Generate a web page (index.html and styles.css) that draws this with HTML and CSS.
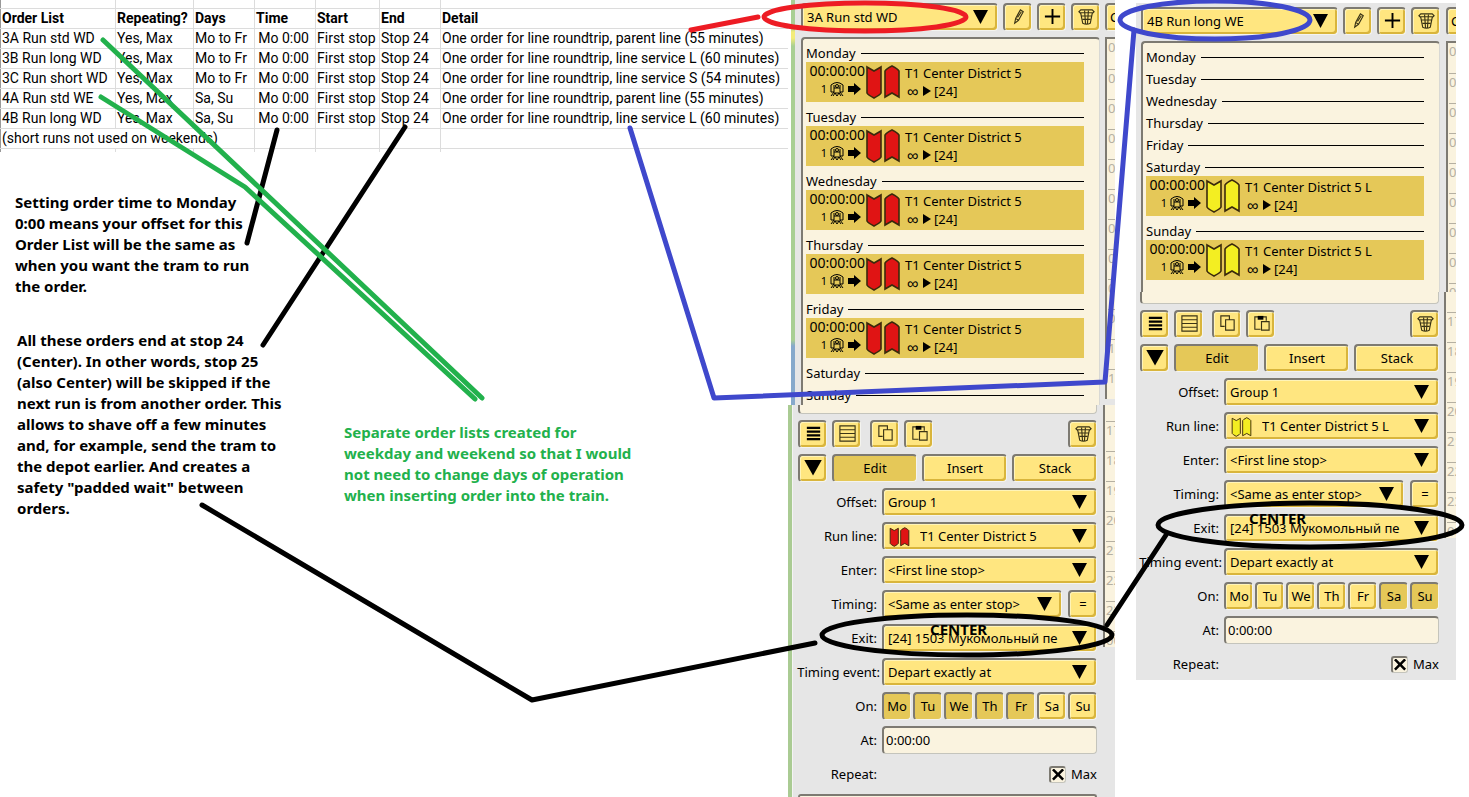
FILE: index.html
```html
<!DOCTYPE html>
<html lang="en">
<head>
    <meta charset="UTF-8">
    <meta name="viewport" content="width=device-width, initial-scale=1.0">
    <title>Tram order lists</title>
    <link rel="stylesheet" href="styles.css">
</head>
<body>
    <!-- Shared icons -->
    <svg class="sprite" aria-hidden="true">
        <symbol id="pencil" viewBox="0 0 20 20"><path d="M6 17l1-5 5-9 3 2-5 9zM7 12l3 2M9 11l4-6" fill="none" stroke="#3a3315" stroke-width="1.2"/></symbol>
        <symbol id="plus" viewBox="0 0 20 20"><path d="M10 2v16M2 10h16" stroke="#000" stroke-width="2"/></symbol>
        <symbol id="trash" viewBox="0 0 20 20"><path d="M4 3h12l2 2-2 2-2 10q-4 2-8 0L4 7 2 5zM3 6h14M5 9.500h10M6 13h8M8 4l1 14M12 4l-1 14" fill="none" stroke="#3a3315" stroke-width="1.200"/></symbol>
        <symbol id="bars" viewBox="0 0 20 20"><path d="M3 4h14M3 8h14M3 12h14M3 16h14" stroke="#000" stroke-width="2.400"/></symbol>
        <symbol id="rows" viewBox="0 0 20 20"><path d="M2 2h16v16H2zM2 6h16M2 10h16M2 14h16" fill="none" stroke="#3a3315" stroke-width="1.200"/></symbol>
        <symbol id="copy" viewBox="0 0 20 20"><path d="M7 13H3V2h9v4M8 6h9v11H8z" fill="none" stroke="#3a3315" stroke-width="1.200"/></symbol>
        <symbol id="paste" viewBox="0 0 20 20"><path d="M9 16H3V3h12v4M10 8h8v9h-8z" fill="none" stroke="#3a3315" stroke-width="1.200"/><path d="M6 2h6v4H6z"/></symbol>
        <symbol id="flags" viewBox="0 0 36 34"><path d="M2 2l7 4 7-4v26q-1 2-7 5-6-3-7-5zM27 1q6 3 7 5v26l-7-4-7 4V6q1-2 7-5z" stroke="#3b2a0c" stroke-width="1.600"/></symbol>
        <symbol id="depot" viewBox="0 0 16 16"><path d="M2 11V4q6-5 12 0v7h-3V7H5v4zM5 7V4M11 7V4M5 11l-3 4M11 11l3 4M5 12h6M4 15l2-3 2 3 2-3 2 3" fill="none" stroke="#000"/><circle cx="8" cy="5" r="1.500" fill="none" stroke="#000"/></symbol>
        <symbol id="arrow" viewBox="0 0 14 12"><path d="M1 3h6V0l7 6-7 6V9H1z"/></symbol>
        <symbol id="play" viewBox="0 0 8 10"><path d="M0 0l8 5-8 5z"/></symbol>
    </svg>

    <main class="board">
        <div class="sheet">
            <table class="orders">
                <colgroup><col class="c-list"><col class="c-rep"><col class="c-days"><col class="c-time"><col class="c-start"><col class="c-end"><col></colgroup>
                <tbody>
                    <tr class="stub"><td></td><td></td><td></td><td></td><td></td><td></td><td></td></tr>
                    <tr><th>Order List</th><th>Repeating?</th><th>Days</th><th>Time</th><th>Start</th><th>End</th><th>Detail</th></tr>
                    <tr><td>3A Run std WD</td><td>Yes, Max</td><td>Mo to Fr</td><td class="num">Mo 0:00</td><td>First stop</td><td>Stop 24</td><td>One order for line roundtrip, parent line (55 minutes)</td></tr>
                    <tr><td>3B Run long WD</td><td>Yes, Max</td><td>Mo to Fr</td><td class="num">Mo 0:00</td><td>First stop</td><td>Stop 24</td><td>One order for line roundtrip, line service L (60 minutes)</td></tr>
                    <tr><td>3C Run short WD</td><td>Yes, Max</td><td>Mo to Fr</td><td class="num">Mo 0:00</td><td>First stop</td><td>Stop 24</td><td>One order for line roundtrip, line service S (54 minutes)</td></tr>
                    <tr><td>4A Run std WE</td><td>Yes, Max</td><td>Sa, Su</td><td class="num">Mo 0:00</td><td>First stop</td><td>Stop 24</td><td>One order for line roundtrip, parent line (55 minutes)</td></tr>
                    <tr><td>4B Run long WD</td><td>Yes, Max</td><td>Sa, Su</td><td class="num">Mo 0:00</td><td>First stop</td><td>Stop 24</td><td>One order for line roundtrip, line service L (60 minutes)</td></tr>
                    <tr><td colspan="3">(short runs not used on weekends)</td><td></td><td></td><td></td><td></td></tr>
                    <tr class="stub"><td></td><td></td><td></td><td></td><td></td><td></td><td></td></tr>
                </tbody>
            </table>

            <div class="notes">
                <div class="notes-left">
                    <p>Setting order time to Monday<br>0:00 means your offset for this<br>Order List will be the same as<br>when you want the tram to run<br>the order.</p>
                    <p class="indent">All these orders end at stop 24<br>(Center). In other words, stop 25<br>(also Center) will be skipped if the<br>next run is from another order. This<br>allows to shave off a few minutes<br>and, for example, send the tram to<br>the depot earlier. And creates a<br>safety "padded wait" between<br>orders.</p>
                </div>
                <p class="green">Separate order lists created for<br>weekday and weekend so that I would<br>not need to change days of operation<br>when inserting order into the train.</p>
            </div>
        </div>

        <!-- Weekday order list -->
        <section class="panel weekday">
            <div class="part upper">
                <div class="map"></div>
                <div class="window">
                    <div class="toolbar">
                        <div class="select"><select aria-label="Order list"><option>3A Run std WD</option></select></div>
                        <button class="icon" aria-label="Rename"><svg><use href="#pencil"/></svg></button>
                        <button class="icon" aria-label="Add"><svg><use href="#plus"/></svg></button>
                        <button class="icon" aria-label="Delete"><svg><use href="#trash"/></svg></button>
                    </div>
                    <div class="list">
                        <div class="day"><h3>Monday</h3>
                            <div class="order"><div class="when"><span>00:00:00</span><span class="sub"><small>1</small><svg class="depot"><use href="#depot"/></svg><svg class="arrow"><use href="#arrow"/></svg></span></div><svg class="flags"><use href="#flags"/></svg><div class="what"><span>T1 Center District 5</span><span class="sub"><i>∞</i><svg class="play"><use href="#play"/></svg>[24]</span></div></div>
                        </div>
                        <div class="day"><h3>Tuesday</h3>
                            <div class="order"><div class="when"><span>00:00:00</span><span class="sub"><small>1</small><svg class="depot"><use href="#depot"/></svg><svg class="arrow"><use href="#arrow"/></svg></span></div><svg class="flags"><use href="#flags"/></svg><div class="what"><span>T1 Center District 5</span><span class="sub"><i>∞</i><svg class="play"><use href="#play"/></svg>[24]</span></div></div>
                        </div>
                        <div class="day"><h3>Wednesday</h3>
                            <div class="order"><div class="when"><span>00:00:00</span><span class="sub"><small>1</small><svg class="depot"><use href="#depot"/></svg><svg class="arrow"><use href="#arrow"/></svg></span></div><svg class="flags"><use href="#flags"/></svg><div class="what"><span>T1 Center District 5</span><span class="sub"><i>∞</i><svg class="play"><use href="#play"/></svg>[24]</span></div></div>
                        </div>
                        <div class="day"><h3>Thursday</h3>
                            <div class="order"><div class="when"><span>00:00:00</span><span class="sub"><small>1</small><svg class="depot"><use href="#depot"/></svg><svg class="arrow"><use href="#arrow"/></svg></span></div><svg class="flags"><use href="#flags"/></svg><div class="what"><span>T1 Center District 5</span><span class="sub"><i>∞</i><svg class="play"><use href="#play"/></svg>[24]</span></div></div>
                        </div>
                        <div class="day"><h3>Friday</h3>
                            <div class="order"><div class="when"><span>00:00:00</span><span class="sub"><small>1</small><svg class="depot"><use href="#depot"/></svg><svg class="arrow"><use href="#arrow"/></svg></span></div><svg class="flags"><use href="#flags"/></svg><div class="what"><span>T1 Center District 5</span><span class="sub"><i>∞</i><svg class="play"><use href="#play"/></svg>[24]</span></div></div>
                        </div>
                        <div class="day"><h3>Saturday</h3></div>
                        <div class="day"><h3>Sunday</h3></div>
                    </div>
                </div>
                <div class="side">
                    <button class="icon cut">C</button>
                    <ol class="hours"><li>00</li><li>01</li><li>02</li><li>03</li><li>04</li><li>05</li><li>06</li><li>07</li><li>08</li><li>09</li><li>10</li><li>11</li></ol>
                </div>
            </div>

            <div class="part lower">
                <div class="map"></div>
                <div class="window">
                    <div class="list-end"></div>
                    <div class="toolbar">
                        <button class="icon" aria-label="Compact list"><svg><use href="#bars"/></svg></button>
                        <button class="icon" aria-label="Full list"><svg><use href="#rows"/></svg></button>
                        <button class="icon gap" aria-label="Copy"><svg><use href="#copy"/></svg></button>
                        <button class="icon" aria-label="Paste"><svg><use href="#paste"/></svg></button>
                        <button class="icon end" aria-label="Delete order"><svg><use href="#trash"/></svg></button>
                    </div>
                    <div class="toolbar tabs">
                        <button class="icon down" aria-label="Collapse"></button>
                        <button class="on">Edit</button>
                        <button>Insert</button>
                        <button>Stack</button>
                    </div>
                    <form class="fields">
                        <label for="a-offset">Offset:</label>
                        <div class="select"><select id="a-offset"><option>Group 1</option></select></div>
                        <label for="a-line">Run line:</label>
                        <div class="select line"><svg><use href="#flags"/></svg><select id="a-line"><option>T1 Center District 5</option></select></div>
                        <label for="a-enter">Enter:</label>
                        <div class="select"><select id="a-enter"><option>&lt;First line stop&gt;</option></select></div>
                        <label for="a-timing">Timing:</label>
                        <div class="pair"><div class="select"><select id="a-timing"><option>&lt;Same as enter stop&gt;</option></select></div><button type="button" class="icon">=</button></div>
                        <label for="a-exit">Exit:</label>
                        <div class="select"><select id="a-exit"><option>[24] 1503 Мукомольный пе</option></select></div>
                        <label for="a-event" class="wide">Timing event:</label>
                        <div class="select"><select id="a-event"><option>Depart exactly at</option></select></div>
                        <span class="label">On:</span>
                        <div class="days"><button type="button" class="on">Mo</button><button type="button" class="on">Tu</button><button type="button" class="on">We</button><button type="button" class="on">Th</button><button type="button" class="on">Fr</button><button type="button">Sa</button><button type="button">Su</button></div>
                        <label for="a-at">At:</label>
                        <input id="a-at" type="text" value="0:00:00">
                        <span class="label">Repeat:</span>
                        <div class="repeat"><input id="a-max" type="checkbox" checked><label for="a-max">Max</label></div>
                    </form>
                    <div class="next-box"></div>
                </div>
                <div class="side">
                    <ol class="hours"><li></li><li>17</li><li>18</li><li>19</li><li>20</li><li>21</li><li>22</li><li>23</li><li>00</li></ol>
                </div>
            </div>
        </section>

        <!-- Weekend order list -->
        <section class="panel weekend">
            <div class="part upper">
                <div class="window">
                    <div class="toolbar">
                        <div class="select"><select aria-label="Order list"><option>4B Run long WE</option></select></div>
                        <button class="icon" aria-label="Rename"><svg><use href="#pencil"/></svg></button>
                        <button class="icon" aria-label="Add"><svg><use href="#plus"/></svg></button>
                        <button class="icon" aria-label="Delete"><svg><use href="#trash"/></svg></button>
                    </div>
                    <div class="list">
                        <div class="day"><h3>Monday</h3></div>
                        <div class="day"><h3>Tuesday</h3></div>
                        <div class="day"><h3>Wednesday</h3></div>
                        <div class="day"><h3>Thursday</h3></div>
                        <div class="day"><h3>Friday</h3></div>
                        <div class="day"><h3>Saturday</h3>
                            <div class="order"><div class="when"><span>00:00:00</span><span class="sub"><small>1</small><svg class="depot"><use href="#depot"/></svg><svg class="arrow"><use href="#arrow"/></svg></span></div><svg class="flags"><use href="#flags"/></svg><div class="what"><span>T1 Center District 5 L</span><span class="sub"><i>∞</i><svg class="play"><use href="#play"/></svg>[24]</span></div></div>
                        </div>
                        <div class="day"><h3>Sunday</h3>
                            <div class="order"><div class="when"><span>00:00:00</span><span class="sub"><small>1</small><svg class="depot"><use href="#depot"/></svg><svg class="arrow"><use href="#arrow"/></svg></span></div><svg class="flags"><use href="#flags"/></svg><div class="what"><span>T1 Center District 5 L</span><span class="sub"><i>∞</i><svg class="play"><use href="#play"/></svg>[24]</span></div></div>
                        </div>
                    </div>
                </div>
                <div class="side">
                    <button class="icon cut">C</button>
                    <ol class="hours"><li>00</li><li>01</li><li>02</li><li>03</li><li>04</li><li>05</li><li>06</li><li>07</li><li>08</li></ol>
                </div>
            </div>

            <div class="part lower">
                <div class="window">
                    <div class="list-end"></div>
                    <div class="toolbar">
                        <button class="icon" aria-label="Compact list"><svg><use href="#bars"/></svg></button>
                        <button class="icon" aria-label="Full list"><svg><use href="#rows"/></svg></button>
                        <button class="icon gap" aria-label="Copy"><svg><use href="#copy"/></svg></button>
                        <button class="icon" aria-label="Paste"><svg><use href="#paste"/></svg></button>
                        <button class="icon end" aria-label="Delete order"><svg><use href="#trash"/></svg></button>
                    </div>
                    <div class="toolbar tabs">
                        <button class="icon down" aria-label="Collapse"></button>
                        <button class="on">Edit</button>
                        <button>Insert</button>
                        <button>Stack</button>
                    </div>
                    <form class="fields">
                        <label for="b-offset">Offset:</label>
                        <div class="select"><select id="b-offset"><option>Group 1</option></select></div>
                        <label for="b-line">Run line:</label>
                        <div class="select line"><svg><use href="#flags"/></svg><select id="b-line"><option>T1 Center District 5 L</option></select></div>
                        <label for="b-enter">Enter:</label>
                        <div class="select"><select id="b-enter"><option>&lt;First line stop&gt;</option></select></div>
                        <label for="b-timing">Timing:</label>
                        <div class="pair"><div class="select"><select id="b-timing"><option>&lt;Same as enter stop&gt;</option></select></div><button type="button" class="icon">=</button></div>
                        <label for="b-exit">Exit:</label>
                        <div class="select"><select id="b-exit"><option>[24] 1503 Мукомольный пе</option></select></div>
                        <label for="b-event" class="wide">Timing event:</label>
                        <div class="select"><select id="b-event"><option>Depart exactly at</option></select></div>
                        <span class="label">On:</span>
                        <div class="days"><button type="button">Mo</button><button type="button">Tu</button><button type="button">We</button><button type="button">Th</button><button type="button">Fr</button><button type="button" class="on">Sa</button><button type="button" class="on">Su</button></div>
                        <label for="b-at">At:</label>
                        <input id="b-at" type="text" value="0:00:00">
                        <span class="label">Repeat:</span>
                        <div class="repeat"><input id="b-max" type="checkbox" checked><label for="b-max">Max</label></div>
                    </form>
                </div>
                <div class="side">
                    <ol class="hours"><li></li><li>17</li><li>18</li><li>19</li><li>20</li><li>21</li><li>22</li><li>23</li><li>00</li></ol>
                </div>
            </div>
        </section>

        <!-- Pointer lines and circles drawn over everything -->
        <svg class="marks" viewBox="0 0 1469 797">
            <text x="930" y="635">CENTER</text>
            <text x="1249" y="524">CENTER</text>
            <g class="ink">
                <path d="M277 130L247 243M405 127L263 345M202 505L532 700 815 643M1107 625L1166 535"/>
                <ellipse cx="967" cy="635" rx="145" ry="20"/>
                <ellipse cx="1310" cy="525" rx="152" ry="22"/>
            </g>
            <g class="ink ink-green">
                <path d="M103 40L482 398M101 97L245 187 475 399"/>
            </g>
            <g class="ink ink-blue">
                <path d="M630 128L714 398 1105 382 1134 30"/>
                <ellipse cx="1215" cy="20" rx="95" ry="19"/>
            </g>
            <g class="ink ink-red">
                <path d="M691 30L758 17"/>
                <ellipse cx="865" cy="17" rx="101" ry="14"/>
            </g>
        </svg>
    </main>
</body>
</html>
```
FILE: styles.css
```css
* {
    margin: 0;
    padding: 0;
    box-sizing: border-box;
}

body {
    font-family: 'Noto Sans', sans-serif;
    font-size: 13px;
    color: #000;
    background: #fff;
}

button, select, input {
    font: inherit;
    color: inherit;
}

.sprite {
    position: absolute;
    width: 0;
    height: 0;
}

.board {
    position: relative;
    display: grid;
    grid-template-columns: minmax(0, 1fr) 327px 341px;
    padding-right: 13px;
    min-height: 100vh;
    overflow: hidden;
}

/* Spreadsheet */
.orders {
    width: 100%;
    table-layout: fixed;
    border-collapse: collapse;
    font-family: Roboto, sans-serif;
    font-size: 14px;
    border-left: 1px solid #999;
}

.orders td, .orders th {
    height: 20px;
    padding: 0 2px 0 1px;
    line-height: 19px;
    text-align: left;
    white-space: nowrap;
    border-right: 1px solid #dcdcdc;
    border-bottom: 1px solid #dcdcdc;
}

.orders td:last-child, .orders th:last-child {
    border-right: none;
}

.orders .stub td {
    height: 8px;
    line-height: 0;
}

.orders .stub:last-child td {
    height: 4px;
    border-bottom: none;
}

.orders .num {
    text-align: right;
    padding-right: 6px;
}

.c-list { width: 115px; }
.c-rep { width: 78px; }
.c-days { width: 61px; }
.c-time { width: 61px; }
.c-start { width: 64px; }
.c-end { width: 61px; }

/* Notes */
.notes {
    display: flex;
    gap: 56px;
    padding: 40px 0 0 15px;
    font-weight: 700;
    font-size: 15px;
    line-height: 21px;
    white-space: nowrap;
}

.notes-left {
    width: 273px;
}

.notes .indent {
    margin-top: 33px;
    padding-left: 2px;
}

.notes .green {
    padding-top: 230px;
    color: #22b14c;
}

/* Game panels */
.part {
    display: flex;
}

.window {
    flex: 1;
    min-width: 0;
    display: flex;
    flex-direction: column;
    background: #e6e6e6;
}

.weekday { display: flex; flex-direction: column; }
.weekday .upper { height: 405px; padding-left: 3px; }
.weekday .upper .window { padding: 3px 5px 0 6px; }
.weekday .lower { flex: 1; }
.weekday .lower .window { padding: 0 6px 0 5px; border-left: 1px solid #f4f4f4; }

.weekend { padding: 3px 0 0 21px; }
.weekend .upper { height: 289px; }
.weekend .upper .window { padding: 4px 6px 0 5px; }
.weekend .lower .window { padding: 0 5px 2px 4px; }

.map {
    width: 4px;
    background: linear-gradient(#a9cf94 0 28px, #f3ec79 32px 38px, #a9cf94 46px 340px, #86a9cc 346px);
}

.lower .map {
    background: #aacb93;
}

.toolbar {
    display: flex;
    gap: 5px;
    margin-bottom: 6px;
}

.toolbar .gap { margin-left: 4px; }
.toolbar .end { margin-left: auto; }

button, .select {
    height: 28px;
    background: #ffe680;
    border: 1px solid #f4f4f0;
    border-top: 2px solid #7d7a72;
    border-left: 2px solid #7d7a72;
    border-radius: 4px;
    box-shadow: inset 1px 1px #fff4b8, inset -2px -2px #d9b53c;
    white-space: nowrap;
}

button {
    flex: 1;
    padding-bottom: 2px;
}

button.on {
    background: #e5c858;
    box-shadow: none;
}

.icon {
    flex: none;
    display: flex;
    align-items: center;
    justify-content: center;
    width: 29px;
}

.icon svg {
    width: 19px;
    height: 19px;
}

.select {
    position: relative;
    flex: 1;
    min-width: 0;
    display: flex;
}

.select select {
    appearance: none;
    flex: 1;
    min-width: 0;
    padding: 0 0 2px 4px;
    background: none;
    border: none;
}

.select::after, .down::after {
    content: "";
    width: 15px;
    height: 14px;
    background: #000;
    clip-path: polygon(0 0, 100% 0, 50% 100%);
}

.select::after {
    position: absolute;
    right: 9px;
    top: 5px;
    pointer-events: none;
}

.down::after {
    width: 18px;
    height: 16px;
}

.line svg {
    position: absolute;
    left: 5px;
    top: 3px;
    width: 21px;
    height: 20px;
}

.line select {
    padding-left: 36px;
}

.list {
    flex: 1;
    min-height: 0;
    overflow: hidden;
    padding: 5px 15px 0 3px;
    background: #faf3df;
    border: 1px solid #d8d8d4;
    border-top: 2px solid #7d7a72;
    border-left: 2px solid #7d7a72;
    border-bottom: none;
    border-radius: 4px 4px 0 0;
}

.list-end {
    height: 9px;
    margin-bottom: 6px;
    background: #faf3df;
    border: 1px solid #c4c4bc;
    border-left: 2px solid #7d7a72;
    border-top: none;
    border-radius: 0 0 4px 4px;
}

.weekend .list-end {
    height: 12px;
}

.next-box {
    height: 3px;
    margin-top: 6px;
    background: #faf3df;
    border: 2px solid #7d7a72;
    border-bottom: none;
    border-radius: 4px 4px 0 0;
}

.day {
    padding-bottom: 4px;
}

.day h3 {
    display: flex;
    align-items: center;
    gap: 5px;
    height: 18px;
    font-size: 13px;
    font-weight: 400;
}

.day h3::after {
    content: "";
    flex: 1;
    height: 1px;
    background: #000;
}

.order {
    display: flex;
    height: 40px;
    margin-bottom: 2px;
    padding-left: 3px;
    background: #e5c858;
}

.when, .what {
    display: flex;
    flex-direction: column;
    line-height: 18px;
}

.when {
    align-items: flex-end;
    width: 56px;
    font-size: 14px;
}

.what {
    padding: 2px 0 0 4px;
}

.sub {
    display: flex;
    align-items: center;
    gap: 3px;
}

.sub svg {
    flex: none;
}

.sub i {
    width: 15px;
    padding-left: 2px;
    font-size: 16px;
    font-style: normal;
}

.sub small {
    font-size: 11px;
}

.when .sub { gap: 2px; padding-right: 4px; }
.depot { width: 16px; height: 16px; }
.arrow { width: 14px; height: 12px; }
.play { width: 8px; height: 10px; }

.flags {
    width: 36px;
    height: 34px;
    margin-top: 3px;
}

.weekday .flags, .weekday .line svg { fill: #e01414; }
.weekend .flags, .weekend .line svg { fill: #f3ee22; }

.fields {
    display: grid;
    grid-template-columns: 84px minmax(0, 1fr);
    grid-auto-rows: 28px;
    row-gap: 6px;
}

.fields > label, .label {
    display: flex;
    align-items: center;
    justify-content: flex-end;
    padding-right: 5px;
    white-space: nowrap;
}

.fields > .wide {
    padding-right: 2px;
}

.pair, .days {
    display: flex;
    gap: 6px;
}

.days {
    gap: 2px;
}

.fields input[type="text"] {
    width: 100%;
    min-width: 0;
    padding: 0 0 1px 2px;
    background: #faf3df;
    border: 1px solid #c4c4bc;
    border-top: 2px solid #7d7a72;
    border-left: 2px solid #7d7a72;
    border-radius: 4px;
}

.repeat {
    display: flex;
    align-items: center;
    justify-content: flex-end;
    gap: 5px;
}

.repeat input {
    appearance: none;
    width: 17px;
    height: 17px;
    padding: 1px;
    background: #faf3df;
    border: 1px solid #c4c4bc;
    border-top: 2px solid #7d7a72;
    border-left: 2px solid #7d7a72;
    border-radius: 3px;
}

.repeat input:checked::before {
    content: "";
    display: block;
    height: 12px;
    background: #000;
    clip-path: polygon(0 15%, 15% 0, 50% 35%, 85% 0, 100% 15%, 65% 50%, 100% 85%, 85% 100%, 50% 65%, 15% 100%, 0 85%, 35% 50%);
}

/* Timeline cut off at the window edge */
.side {
    width: 10px;
    overflow: hidden;
    background: #e6e6e6;
}

.lower .side {
    width: 12px;
}

.weekday .upper .side { padding-top: 3px; }
.weekend .upper .side { padding-top: 4px; }

.cut {
    margin-bottom: 6px;
    padding-left: 3px;
    justify-content: flex-start;
}

.hours {
    list-style: none;
    overflow: hidden;
    padding-left: 1px;
    background: #faf3df;
    border-left: 2px solid #7d7a72;
    border-top: 2px solid #7d7a72;
    color: #b5b0a2;
    line-height: 16px;
}

.hours li {
    height: 30px;
    border-top: 1px solid #b5b0a2;
}

.hours li:first-child {
    border-top: none;
}

.lower .hours {
    border-top: none;
}

.lower .hours li:first-child, .lower .hours li:last-child {
    height: 16px;
}

.weekend .lower .hours li:first-child {
    height: 20px;
}

/* Hand drawn marks */
.marks {
    position: absolute;
    left: 0;
    top: 0;
    width: 100%;
    pointer-events: none;
}

.marks text {
    font-size: 15px;
    font-weight: 700;
}

.ink {
    fill: none;
    stroke: #000;
    stroke-width: 5;
    stroke-linecap: round;
    stroke-linejoin: round;
}

.ink-green { stroke: #22b14c; }
.ink-blue { stroke: #3f48cc; }
.ink-red { stroke: #ed1c24; }
```
